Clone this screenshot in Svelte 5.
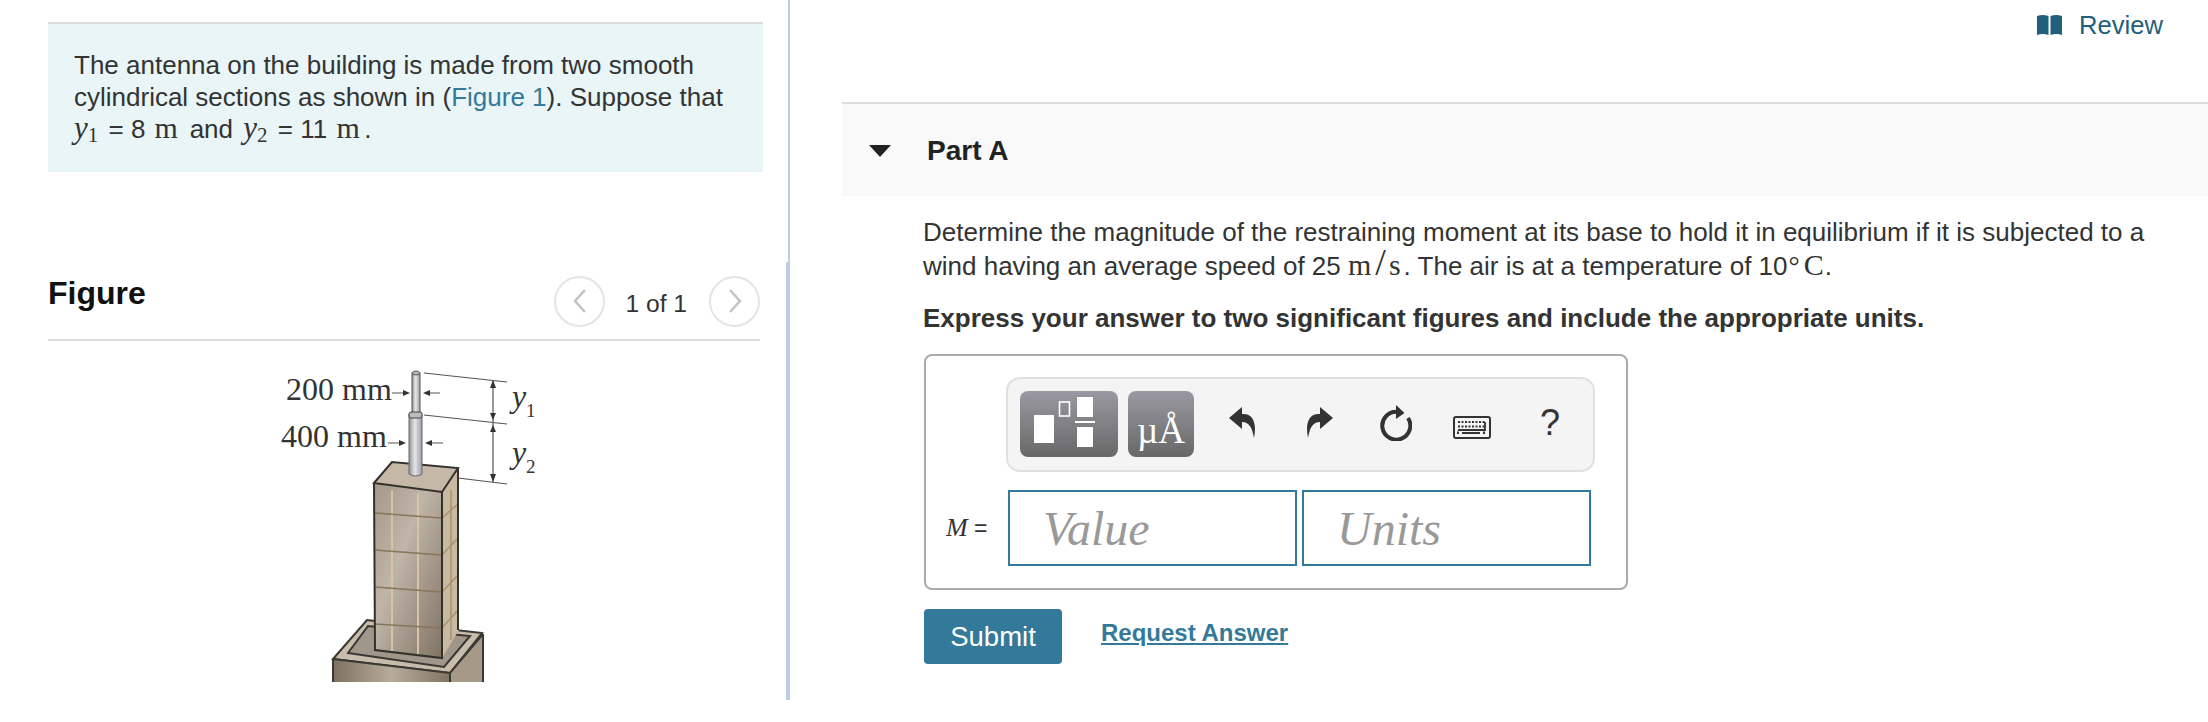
<script>
  const stoneLines = [
    'M375 513 L441 518', 'M375 550 L441 555', 'M375 587 L441 592', 'M375 624 L441 628'
  ];
</script>

<div class="page">
  <aside class="left">
    <div class="intro">
      <p>The antenna on the building is made from two smooth cylindrical sections as shown in (<a href="#f">Figure 1</a>). Suppose that <span class="mi">y</span><span class="sub">1</span> = 8 <span class="mn unit">m</span> and <span class="mi later">y</span><span class="sub">2</span> = 11 <span class="mn unit">m</span>.</p>
    </div>
    <div class="fig-head">
      <h2>Figure</h2>
      <div class="pager">
        <span class="round">
          <svg width="16" height="26" viewBox="0 0 16 26"><path d="M13 2 L3 13 L13 24" fill="none" stroke="#c4c4c4" stroke-width="2.6"/></svg>
        </span>
        <span class="count">1 of 1</span>
        <span class="round">
          <svg width="16" height="26" viewBox="0 0 16 26"><path d="M3 2 L13 13 L3 24" fill="none" stroke="#c4c4c4" stroke-width="2.6"/></svg>
        </span>
      </div>
    </div>
    <div class="figure">
      <svg width="340" height="341" viewBox="240 341 340 341">
        <defs>
          <linearGradient id="front" x1="0" y1="0" x2="1" y2="1">
            <stop offset="0" stop-color="#a39889"/>
            <stop offset="0.4" stop-color="#bfb5a8"/>
            <stop offset="1" stop-color="#7f7364"/>
          </linearGradient>
          <linearGradient id="base" x1="0" y1="0" x2="1" y2="0">
            <stop offset="0" stop-color="#7d7161"/>
            <stop offset="0.5" stop-color="#b7ab9b"/>
            <stop offset="1" stop-color="#7f7363"/>
          </linearGradient>
          <linearGradient id="rod" x1="0" y1="0" x2="1" y2="0">
            <stop offset="0" stop-color="#8f9499"/>
            <stop offset="0.45" stop-color="#e4e6e8"/>
            <stop offset="1" stop-color="#9a9ea3"/>
          </linearGradient>
          <filter id="soft"><feGaussianBlur stdDeviation="0.5"/></filter>
        </defs>
        <g filter="url(#soft)">
          <polygon points="333,659 367,620 482,633 450,673" fill="#c8bcab" stroke="#3a3733" stroke-width="2"/>
          <polygon points="348,653 368,626 470,636 444,667" fill="#a1968a" stroke="#3a3733" stroke-width="2"/>
          <polygon points="333,659 450,673 450,682 333,682" fill="url(#base)"/>
          <polygon points="450,673 483,634 483,682 450,682" fill="#a59988"/>
          <path d="M333 659 V682 M450 673 V682 M483 634 V682 M333 659 L450 673 L483 634" fill="none" stroke="#3a3733" stroke-width="2"/>
          <polygon points="442,492 458,468 459,630 442,658" fill="#c9b9a2"/>
          <polygon points="374,483 442,492 442,658 375,650" fill="url(#front)"/>
          <polygon points="374,483 392,462 458,468 442,492" fill="#c6b8a7"/>
          <path d="M392 490 V652 M418 493 V655" stroke="#d8c3a4" stroke-width="2" fill="none"/>
          {#each stoneLines as d}
            <path {d} stroke="#86765a" stroke-width="1.5" fill="none"/>
          {/each}
          <path d="M442 518 L458 504 M442 555 L458 538 M442 592 L458 575 M442 628 L458 610 M451 490 V640" stroke="#a89069" stroke-width="1.4" fill="none"/>
          <polygon points="374,483 392,462 458,468 442,492" fill="none" stroke="#33302c" stroke-width="2"/>
          <path d="M374 483 L375 650 L442 658 V492 M458 468 V630" fill="none" stroke="#33302c" stroke-width="2"/>
          <rect x="412" y="373" width="8" height="42" fill="url(#rod)" stroke="#555" stroke-width="1"/>
          <ellipse cx="416" cy="373" rx="3.500" ry="2" fill="#bbb" stroke="#555"/>
          <path d="M409 414 H422 V474 Q415.500 478 409 474 Z" fill="url(#rod)" stroke="#666" stroke-width="1"/>
          <rect x="409" y="412" width="13" height="6" rx="2" fill="#b9bcc0" stroke="#444" stroke-width="1"/>
          <path d="M424 373 L507 382 M424 415 L507 424 M458 478 L507 484 M493 380 V482" stroke="#555" stroke-width="1.200" fill="none"/>
          <path d="M493 380 l-3 8 h6 Z M493 420 l-3 -7 h6 Z M493 425 l-3 7 h6 Z M493 482 l-3 -8 h6 Z" fill="#333"/>
          <path d="M392 393 H404 M428 393 H440 M388 443 H400 M431 443 H443" stroke="#555" stroke-width="1.200" fill="none"/>
          <path d="M410 393 l-7 -3 v6 Z M423 393 l7 -3 v6 Z M406 443 l-7 -3 v6 Z M425 443 l7 -3 v6 Z" fill="#333"/>
        </g>
        <text x="286" y="400" class="dim">200 mm</text>
        <text x="281" y="447" class="dim">400 mm</text>
        <text x="512" y="407" class="sym">y</text><text x="526" y="417" class="symsub">1</text>
        <text x="512" y="463" class="sym">y</text><text x="526" y="473" class="symsub">2</text>
      </svg>
    </div>
  </aside>

  <main class="right">
    <div class="review">
      <svg class="book" width="25" height="20" viewBox="0 0 25 20">
        <path d="M0 1 Q6 -1 11.500 1 V20 Q6 18 0 20 Z M13.500 1 Q19 -1 25 1 V20 Q19 18 13.500 20 Z" fill="#21607a"/>
      </svg>
      <a href="#r">Review</a>
    </div>
    <header class="part">
      <span class="caret"></span>
      <h3>Part A</h3>
    </header>
    <section class="body">
      <p class="q">Determine the magnitude of the restraining moment at its base to hold it in equilibrium if it is subjected to a wind having an average speed of 25 <span class="mn wide">m</span><span class="slash">/</span><span class="mn ess">s</span>. The air is at a temperature of 10<span class="mn deg">°</span><span class="mn wide">C</span>.</p>
      <p class="hint">Express your answer to two significant figures and include the appropriate units.</p>

      <div class="answer">
        <div class="toolbar">
          <span class="tbtn t1">
            <svg width="98" height="66" viewBox="0 0 98 66">
              <rect x="14" y="24" width="20" height="28" fill="#fff"/>
              <rect x="39.500" y="11" width="10" height="14" fill="none" stroke="#fff" stroke-width="1.600"/>
              <rect x="57" y="6" width="16" height="20" fill="#fff"/>
              <rect x="55" y="30" width="20" height="2" fill="#fff"/>
              <rect x="57" y="36" width="16" height="20" fill="#fff"/>
            </svg>
          </span>
          <span class="tbtn t2">µÅ</span>
          <svg class="undo" width="27" height="31" viewBox="0 0 27 31">
            <path d="M13 0 L0 11 L13 22 V15 C20 15 23 20 25 31 C28 16 24 6 13 7 Z" fill="#333"/>
          </svg>
          <svg class="redo" width="27" height="31" viewBox="0 0 27 31">
            <path d="M14 0 L27 11 L14 22 V15 C7 15 4 20 2 31 C-1 16 3 6 14 7 Z" fill="#333"/>
          </svg>
          <svg class="reload" width="32" height="36" viewBox="0 0 32 36">
            <path d="M17 6.700 A14 14 0 1 0 28 13" fill="none" stroke="#333" stroke-width="4"/>
            <path d="M16 0 L24.500 8 L16 14 Z" fill="#333"/>
          </svg>
          <svg class="kbd" width="38" height="23" viewBox="0 0 38 23">
            <rect x="1" y="1" width="36" height="21" rx="2" fill="#f4f4f4" stroke="#333" stroke-width="2"/>
            <path d="M5 6 H32 M5 10.500 H32" stroke="#333" stroke-width="2" stroke-dasharray="2 1.500" fill="none"/>
            <path d="M32 6 V14 H5 M9 17 H27" stroke="#333" stroke-width="1.800" fill="none"/>
            <path d="M5 15.500 V18 M31 15.500 V18" stroke="#333" stroke-width="2" fill="none"/>
          </svg>
          <span class="help">?</span>
        </div>
        <div class="row">
          <label class="var" for="v"><i>M</i> =</label>
          <input id="v" class="field" placeholder="Value" />
          <input class="field" placeholder="Units" />
        </div>
      </div>

      <div class="actions">
        <button class="submit">Submit</button>
        <a class="req" href="#a">Request Answer</a>
      </div>
    </section>
  </main>
</div>

<style>
  :global(body) { margin: 0; background: #fff; }
  .page {
    display: flex;
    width: 2208px;
    height: 722px;
    font-family: "Liberation Sans", Arial, sans-serif;
    font-size: 26px;
    color: #333;
    overflow: hidden;
  }
  p { margin: 0; }
  a { color: #337a9a; text-decoration: none; }
  .left {
    width: 790px;
    height: 700px;
    box-sizing: border-box;
    padding: 22px 26px 0 48px;
    flex: none;
    background:
      linear-gradient(#bccde0, #bccde0) right 0 top 0 / 2px 262px no-repeat,
      linear-gradient(#bccde0, #bccde0) right 0 top 262px / 4px 438px no-repeat;
  }
  .intro {
    width: 715px;
    height: 150px;
    box-sizing: border-box;
    border-top: 2px solid #ddd;
    background: #e9f5f7;
    padding: 25px 26px;
    line-height: 32px;
  }
  .mi { font-family: "Liberation Serif", serif; font-style: italic; font-size: 31px; line-height: 0; }
  .later { margin-left: 3px; }
  .mn { font-family: "Liberation Serif", serif; font-size: 30px; line-height: 0; }
  .unit { margin: 0 4px 0 2px; letter-spacing: 0.5px; }
  .wide { letter-spacing: 1px; }
  .ess { margin-right: 3px; }
  .sub { font-family: "Liberation Serif", serif; font-size: 21px; vertical-align: -4px; line-height: 0; margin-right: 3px; }
  .fig-head {
    width: 712px;
    height: 115px;
    margin-top: 54px;
    box-sizing: border-box;
    border-bottom: 2px solid #ddd;
    display: flex;
    justify-content: space-between;
  }
  h2 { margin: 49px 0 0; font-size: 32px; line-height: 36px; color: #111; font-weight: bold; }
  .pager { display: flex; align-items: center; height: 52px; margin-top: 49px; }
  .round {
    width: 51px; height: 51px; box-sizing: border-box;
    border: 2px solid #e4e4e4; border-radius: 50%;
    display: flex; align-items: center; justify-content: center;
  }
  .count { margin: 5px 22px 0 20px; font-size: 24.600px; }
  .figure { margin-left: 192px; height: 341px; }
  .figure svg { display: block; }
  .dim { font-family: "Liberation Serif", serif; font-size: 32px; fill: #333; }
  .sym { font-family: "Liberation Serif", serif; font-style: italic; font-size: 32px; fill: #333; }
  .symsub { font-family: "Liberation Serif", serif; font-size: 19px; fill: #333; }

  .right { flex: 1; padding-left: 52px; min-width: 0; }
  .review {
    height: 102px; box-sizing: border-box;
    display: flex; justify-content: flex-end; align-items: flex-start;
    padding: 10px 45px 0 0;
    gap: 17px;
    font-size: 25.600px;
    line-height: 30px;
  }
  .review a { color: #21607a; }
  .book { margin-top: 5px; }
  .part {
    height: 94px; box-sizing: border-box;
    border-top: 2px solid #ddd;
    background: #f9f9f9;
    display: flex; align-items: center;
    padding: 1px 0 0 27px;
  }
  .caret {
    width: 0; height: 0;
    border-left: 11px solid transparent;
    border-right: 11px solid transparent;
    border-top: 12px solid #222;
    margin-right: 36px;
  }
  h3 { margin: 0; font-size: 28px; font-weight: bold; color: #222; }
  .body { padding: 19px 0 0 82px; }
  .q { width: 1250px; line-height: 34px; margin-left: -1px; }
  .hint { font-weight: bold; margin: 18px 0 0 -1px; line-height: 34px; }
  .slash { font-family: "Liberation Serif", serif; font-size: 38px; line-height: 0; margin: 0 3px; }
  .deg { margin: 0 4px 0 1px; font-size: 28px; }
  .answer {
    width: 704px; height: 236px; box-sizing: border-box;
    margin-top: 19px;
    border: 2px solid #aaa; border-radius: 8px;
    padding: 21px 0 0 80px;
  }
  .toolbar {
    width: 589px; height: 95px; box-sizing: border-box;
    border: 2px solid #e0e0e0; border-radius: 14px;
    background: #f4f4f4;
    display: flex; align-items: flex-start;
    padding-left: 12px;
  }
  .tbtn {
    display: block; height: 66px; margin-top: 12px; box-sizing: border-box;
    border-radius: 8px;
    background: linear-gradient(#9a98a2, #686868);
    color: #fff;
  }
  .t1 { width: 98px; }
  .t1 svg { display: block; }
  .t2 {
    width: 66px; margin-left: 10px;
    font-family: "Liberation Serif", serif; font-size: 37px;
    text-align: center; line-height: 80px;
  }
  .undo { margin: 28px 0 0 35px; }
  .redo { margin: 28px 0 0 50px; }
  .reload { margin: 26px 0 0 47px; }
  .kbd { margin: 37px 0 0 41px; }
  .help { margin: 24px 0 0 49px; font-size: 36px; line-height: 40px; }
  .row { display: flex; align-items: center; margin-top: 18px; margin-left: -60px; }
  .var { width: 62px; flex: none; white-space: nowrap; font-size: 23px; }
  .var i { font-family: "Liberation Serif", serif; font-size: 26px; }
  .field {
    width: 289px; height: 76px; box-sizing: border-box; flex: none;
    border: 2px solid #337a9a; border-radius: 0;
    padding: 0 0 0 33px; margin: 0 5px 0 0;
    font-family: "Liberation Serif", serif; font-style: italic; font-size: 48px;
    background: #fff; color: #333; outline: none;
  }
  .field::placeholder { color: #999; opacity: 1; }
  .actions { display: flex; align-items: flex-start; margin-top: 19px; }
  .submit {
    width: 138px; height: 55px;
    background: #337a9a; color: #fff;
    border: 0; border-radius: 4px;
    font: 27.500px "Liberation Sans", sans-serif;
    padding: 0;
  }
  .req {
    margin: 10px 0 0 39px;
    font-weight: bold;
    font-size: 24px;
    text-decoration: underline;
  }
</style>
